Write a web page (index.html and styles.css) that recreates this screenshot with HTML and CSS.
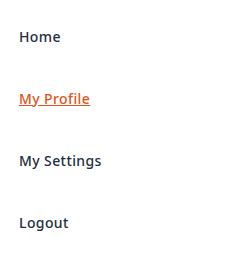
FILE: index.html
```html
<!DOCTYPE html>
<html lang="en">
<head>
    <meta charset="UTF-8">
    <meta name="viewport" content="width=device-width, initial-scale=1.0">
    <title>Menu</title>
    <link rel="stylesheet" href="styles.css">
</head>
<body>
    <ul class="menu">
        <li class="menu-item"><a href="#">Home</a></li>
        <li class="menu-item active"><a href="#">My Profile</a></li>
        <li class="menu-item"><a href="#">My Settings</a></li>
        <li class="menu-item"><a href="#">Logout</a></li>
    </ul>
</body>
</html>
```

FILE: styles.css
```css
body {
    font-family: 'Noto Sans', sans-serif;
    margin: 0;
    padding: 0;
    background-color: #fff;
    color: #232f3e;
}

.menu {
    list-style: none;
    margin: 0;
    padding: 27px 0 0 19px;
    display: flex;
    flex-direction: column;
    gap: 42px;
}

.menu-item {
    font-size: 14px;
    font-weight: 500;
    line-height: 20px;
    letter-spacing: 0.4px;
}

.menu-item a {
    color: #232f3e;
    text-decoration: none;
}

.menu-item.active a {
    color: #e0561a;
    text-decoration: underline;
}
```
